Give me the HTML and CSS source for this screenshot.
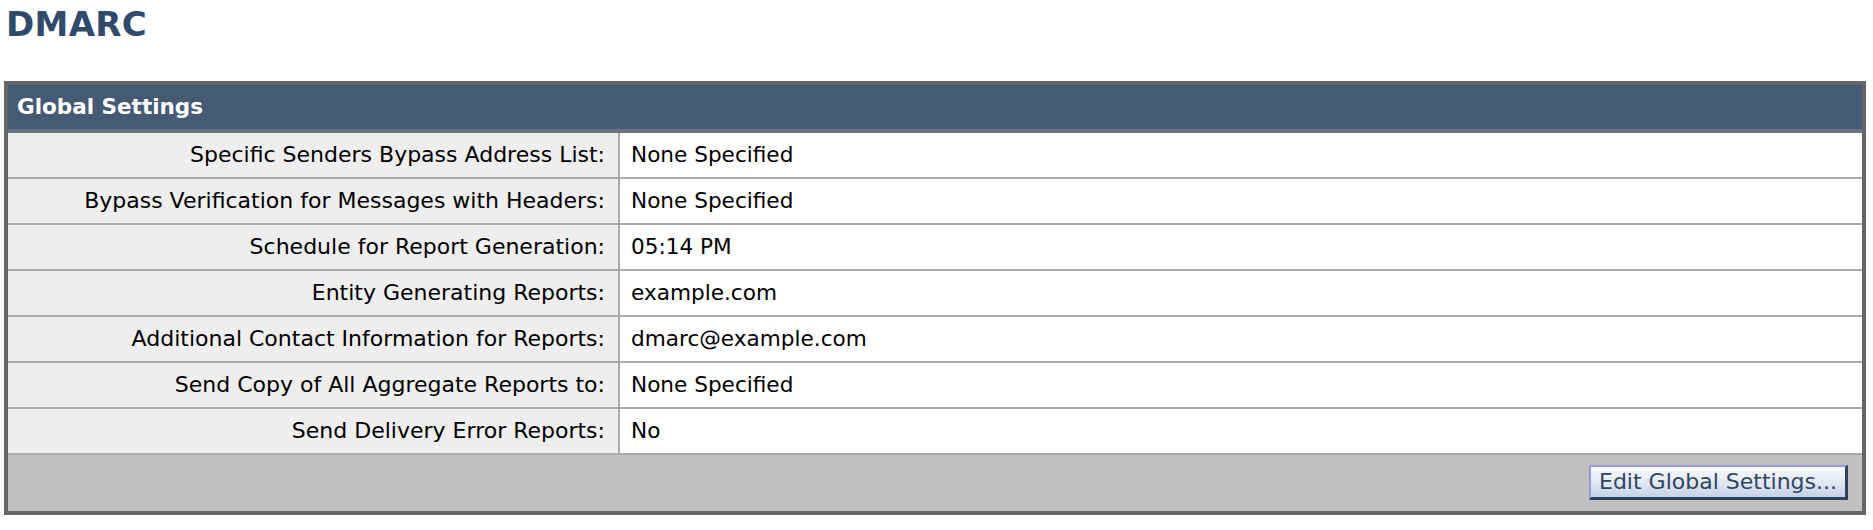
FILE: index.html
```html
<!DOCTYPE html>
<html>
<head>
<meta charset="utf-8">
<link rel="stylesheet" href="styles.css">
</head>
<body>
<h1 class="title">DMARC</h1>
<div class="panel">
  <div class="panel-head">Global Settings</div>
  <div class="grid">
    <div class="label">Specific Senders Bypass Address List:</div><div class="value">None Specified</div>
    <div class="label">Bypass Verification for Messages with Headers:</div><div class="value">None Specified</div>
    <div class="label">Schedule for Report Generation:</div><div class="value">05:14 PM</div>
    <div class="label">Entity Generating Reports:</div><div class="value">example.com</div>
    <div class="label">Additional Contact Information for Reports:</div><div class="value">dmarc@example.com</div>
    <div class="label">Send Copy of All Aggregate Reports to:</div><div class="value">None Specified</div>
    <div class="label">Send Delivery Error Reports:</div><div class="value">No</div>
  </div>
  <div class="panel-foot">
    <button class="btn">Edit Global Settings...</button>
  </div>
</div>
</body>
</html>
```

FILE: styles.css
```css
html, body {
  margin: 0;
  padding: 0;
  background: #ffffff;
}
body {
  padding: 0 7px 0 4px;
  font-family: "DejaVu Sans", Verdana, sans-serif;
  color: #000;
}
.title {
  margin: 0;
  padding: 5px 0 0 2px;
  height: 81px;
  box-sizing: border-box;
  font-size: 34px;
  font-weight: bold;
  color: #2f4a6b;
  line-height: 38px;
  letter-spacing: 0.3px;
}
.panel {
  border: 4px solid #666666;
  background: #c0c0c0;
}
.panel-head {
  background: #455a73;
  color: #ffffff;
  font-weight: bold;
  font-size: 21.5px;
  height: 44px;
  line-height: 44px;
  padding-left: 9px;
  border-bottom: 4px solid #6b7480;
}
.grid {
  display: grid;
  grid-template-columns: 612px 1fr;
}
.label, .value {
  height: 44px;
  line-height: 44px;
  font-size: 22px;
  border-bottom: 2px solid #aaaaaa;
  white-space: nowrap;
}
.label {
  background: #eeeeee;
  text-align: right;
  padding-right: 13px;
  border-right: 2px solid #aaaaaa;
}
.value {
  background: #ffffff;
  padding-left: 11px;
  font-size: 21.6px;
}
.panel-foot {
  height: 56px;
  display: flex;
  align-items: center;
  justify-content: flex-end;
  padding-right: 14px;
  background: #c0c0c0;
}
.btn {
  height: 35px;
  width: 259px;
  font-family: "DejaVu Sans", Verdana, sans-serif;
  font-size: 22px;
  line-height: 28px;
  color: #2f4560;
  background: linear-gradient(#f6f8fc, #e4e9f3 50%, #c5d1e6);
  border-style: solid;
  border-width: 2px 3px 3px 2px;
  border-color: #9a9ad6 #2e4260 #2e4260 #9a9ad6;
  padding: 0;
  margin-top: -1px;
}
```
